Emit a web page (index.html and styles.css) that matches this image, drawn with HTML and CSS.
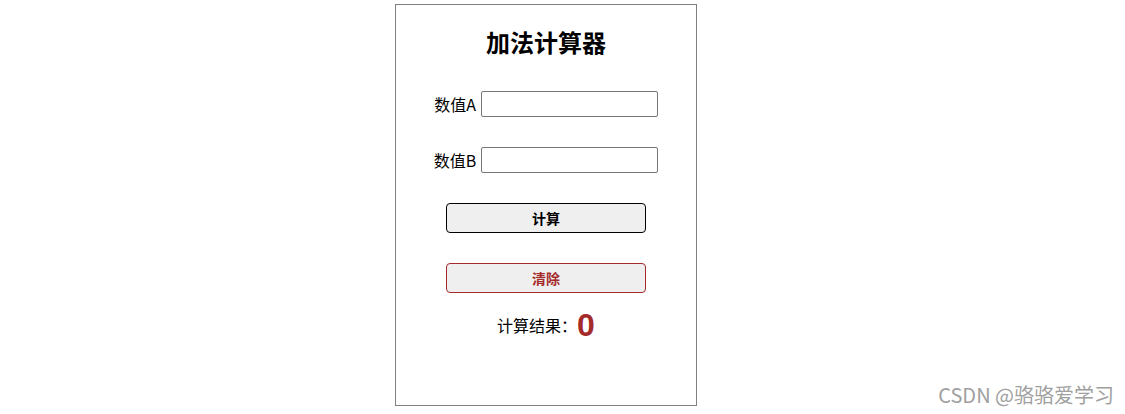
FILE: index.html
```html
<!DOCTYPE html>
<html lang="zh-CN">
<head>
  <meta charset="UTF-8">
  <title>加法计算器</title>
  <link rel="stylesheet" href="styles.css">
</head>
<body>
  <div class="page">
    <div class="calculator">
      <h2 class="title">加法计算器</h2>

      <div class="field">
        <label for="num-a">数值A</label>
        <input type="text" id="num-a" class="field-input">
      </div>

      <div class="field">
        <label for="num-b">数值B</label>
        <input type="text" id="num-b" class="field-input">
      </div>

      <button class="btn btn-calc">计算</button>
      <button class="btn btn-clear">清除</button>

      <div class="result">
        <span class="result-label">计算结果：</span><span class="result-value">0</span>
      </div>
    </div>
  </div>

  <div class="watermark">CSDN @骆骆爱学习</div>
</body>
</html>
```

FILE: styles.css
```css
* {
  box-sizing: border-box;
}

body {
  margin: 0;
  font-family: "Noto Sans CJK SC", "Liberation Sans", sans-serif;
  color: #000;
  background: #fff;
}

.page {
  padding: 4px 0 0 395px;
}

/* 计算器容器 */
.calculator {
  width: 302px;
  height: 402px;
  border: 1px solid #808080;
  display: flex;
  flex-direction: column;
  align-items: center;
  padding-top: 25px;
}

.title {
  margin: 0 0 37px;
  font-size: 24px;
  line-height: 24px;
  font-weight: bold;
}

.field {
  display: flex;
  align-items: center;
  gap: 5px;
  height: 26px;
  margin-bottom: 30px;
  font-size: 16px;
}

.field label {
  line-height: 24px;
}

.field-input {
  width: 177px;
  height: 26px;
  border: 1px solid #767676;
  border-radius: 2px;
  padding: 1px 2px;
  font-size: 14px;
}

.btn {
  width: 200px;
  height: 30px;
  border-radius: 4px;
  background: #efefef;
  font-family: inherit;
  font-size: 14px;
  font-weight: bold;
  line-height: 1;
  margin-bottom: 30px;
  cursor: pointer;
}

.btn-calc {
  border: 1px solid #000;
  color: #000;
}

.btn-clear {
  border: 1px solid #a52a2a;
  color: #a52a2a;
  margin-bottom: 16px;
}

.result {
  display: flex;
  align-items: center;
  height: 32px;
  font-size: 16px;
}

.result-value {
  font-family: "Liberation Sans", sans-serif;
  font-size: 32px;
  font-weight: bold;
  color: #a52a2a;
  line-height: 32px;
}

/* 水印 */
.watermark {
  position: absolute;
  right: 11px;
  top: 383px;
  font-size: 20px;
  line-height: 24px;
  color: #a0a0a0;
}
```
